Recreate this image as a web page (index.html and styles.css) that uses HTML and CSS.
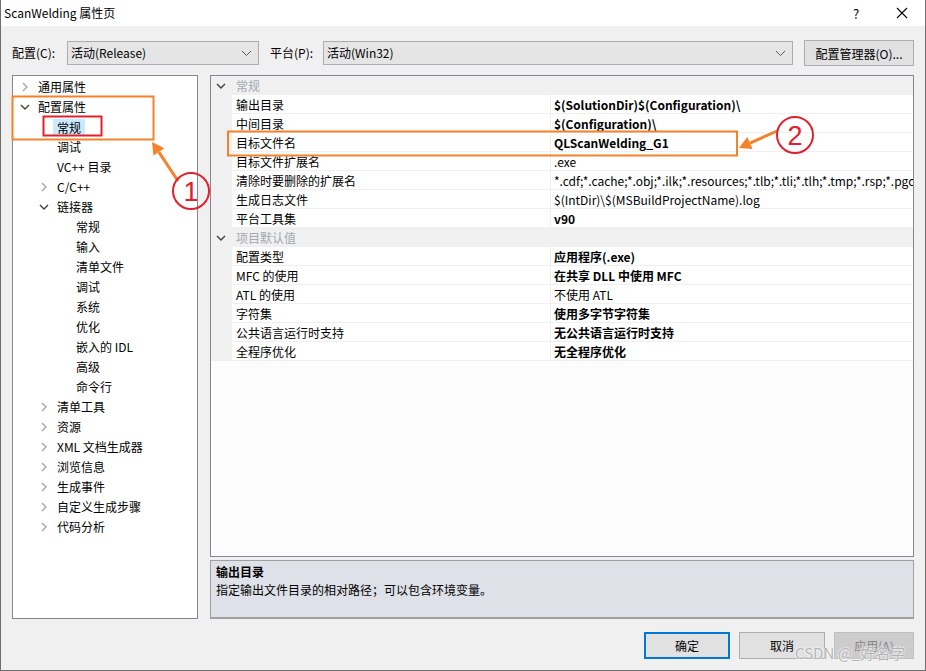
FILE: index.html
```html
<!DOCTYPE html>
<html lang="zh-CN">
<head>
    <meta charset="UTF-8">
    <title>ScanWelding 属性页</title>
    <link rel="stylesheet" href="styles.css">
</head>
<body>
<div class="screen">
    <div class="window">
        <div class="titlebar">
            <span class="title">ScanWelding 属性页</span>
            <span class="cap-btn">?</span>
            <span class="cap-btn">
                <svg width="12" height="12" viewBox="0 0 12 12"><path d="M1 1L11 11M11 1L1 11" stroke="#000" stroke-width="1.1"/></svg>
            </span>
        </div>

        <div class="body">
            <div class="config-row">
                <span class="field-label">配置(C):</span>
                <div class="combo combo-config">
                    <span>活动(Release)</span>
                    <svg width="11" height="7" viewBox="0 0 11 7"><path d="M1 1L5.5 5.5L10 1" fill="none" stroke="#555" stroke-width="1"/></svg>
                </div>
                <span class="field-label platform-label">平台(P):</span>
                <div class="combo combo-platform">
                    <span>活动(Win32)</span>
                    <svg width="11" height="7" viewBox="0 0 11 7"><path d="M1 1L5.5 5.5L10 1" fill="none" stroke="#555" stroke-width="1"/></svg>
                </div>
                <button class="btn btn-manager">配置管理器(O)...</button>
            </div>

            <div class="main">
                <ul class="tree">
                    <li class="node lvl0"><span class="twisty closed"></span>通用属性</li>
                    <li class="node lvl0"><span class="twisty open"></span>配置属性</li>
                    <li class="node lvl1"><span class="twisty"></span><span class="sel">常规</span></li>
                    <li class="node lvl1"><span class="twisty"></span>调试</li>
                    <li class="node lvl1"><span class="twisty"></span>VC++ 目录</li>
                    <li class="node lvl1"><span class="twisty closed"></span>C/C++</li>
                    <li class="node lvl1"><span class="twisty open"></span>链接器</li>
                    <li class="node lvl2"><span class="twisty"></span>常规</li>
                    <li class="node lvl2"><span class="twisty"></span>输入</li>
                    <li class="node lvl2"><span class="twisty"></span>清单文件</li>
                    <li class="node lvl2"><span class="twisty"></span>调试</li>
                    <li class="node lvl2"><span class="twisty"></span>系统</li>
                    <li class="node lvl2"><span class="twisty"></span>优化</li>
                    <li class="node lvl2"><span class="twisty"></span>嵌入的 IDL</li>
                    <li class="node lvl2"><span class="twisty"></span>高级</li>
                    <li class="node lvl2"><span class="twisty"></span>命令行</li>
                    <li class="node lvl1"><span class="twisty closed"></span>清单工具</li>
                    <li class="node lvl1"><span class="twisty closed"></span>资源</li>
                    <li class="node lvl1"><span class="twisty closed"></span>XML 文档生成器</li>
                    <li class="node lvl1"><span class="twisty closed"></span>浏览信息</li>
                    <li class="node lvl1"><span class="twisty closed"></span>生成事件</li>
                    <li class="node lvl1"><span class="twisty closed"></span>自定义生成步骤</li>
                    <li class="node lvl1"><span class="twisty closed"></span>代码分析</li>
                </ul>

                <div class="right">
                    <div class="grid">
                        <div class="prow cat"><span class="gutter"><span class="twisty open"></span></span><span class="cat-name">常规</span></div>
                        <div class="prow"><span class="gutter"></span><span class="name">输出目录</span><span class="val b">$(SolutionDir)$(Configuration)\</span></div>
                        <div class="prow"><span class="gutter"></span><span class="name">中间目录</span><span class="val b">$(Configuration)\</span></div>
                        <div class="prow"><span class="gutter"></span><span class="name">目标文件名</span><span class="val b">QLScanWelding_G1</span></div>
                        <div class="prow"><span class="gutter"></span><span class="name">目标文件扩展名</span><span class="val">.exe</span></div>
                        <div class="prow"><span class="gutter"></span><span class="name">清除时要删除的扩展名</span><span class="val">*.cdf;*.cache;*.obj;*.ilk;*.resources;*.tlb;*.tli;*.tlh;*.tmp;*.rsp;*.pgc;*.pgd;*.meta;$(TargetPath)</span></div>
                        <div class="prow"><span class="gutter"></span><span class="name">生成日志文件</span><span class="val">$(IntDir)\$(MSBuildProjectName).log</span></div>
                        <div class="prow"><span class="gutter"></span><span class="name">平台工具集</span><span class="val b">v90</span></div>
                        <div class="prow cat"><span class="gutter"><span class="twisty open"></span></span><span class="cat-name">项目默认值</span></div>
                        <div class="prow"><span class="gutter"></span><span class="name">配置类型</span><span class="val b">应用程序(.exe)</span></div>
                        <div class="prow"><span class="gutter"></span><span class="name">MFC 的使用</span><span class="val b">在共享 DLL 中使用 MFC</span></div>
                        <div class="prow"><span class="gutter"></span><span class="name">ATL 的使用</span><span class="val">不使用 ATL</span></div>
                        <div class="prow"><span class="gutter"></span><span class="name">字符集</span><span class="val b">使用多字节字符集</span></div>
                        <div class="prow"><span class="gutter"></span><span class="name">公共语言运行时支持</span><span class="val b">无公共语言运行时支持</span></div>
                        <div class="prow"><span class="gutter"></span><span class="name">全程序优化</span><span class="val b">无全程序优化</span></div>
                    </div>
                    <div class="desc">
                        <div class="desc-title">输出目录</div>
                        <div>指定输出文件目录的相对路径；可以包含环境变量。</div>
                    </div>
                </div>
            </div>

            <div class="buttons">
                <button class="btn btn-ok">确定</button>
                <button class="btn">取消</button>
                <button class="btn btn-off">应用(A)</button>
            </div>
        </div>
    </div>

    <!-- hand drawn marks on top of the screenshot -->
    <svg class="marks" width="926" height="671" viewBox="0 0 926 671">
        <g fill="none" stroke="#f5822a" stroke-width="2">
            <rect x="12.5" y="96.5" width="141" height="43"/>
            <rect x="228" y="131.5" width="509" height="24"/>
        </g>
        <rect x="43.5" y="116.5" width="58" height="19" fill="none" stroke="#e3202a" stroke-width="2"/>

        <line x1="178" y1="181" x2="158.8" y2="151.9" stroke="#f5822a" stroke-width="3"/>
        <path d="M152 142L164.3 148.3L153.4 155.6Z" fill="#f5822a"/>
        <line x1="777" y1="131" x2="750" y2="143.1" stroke="#f5822a" stroke-width="3"/>
        <path d="M739 148L747.3 137L752.6 149Z" fill="#f5822a"/>

        <g fill="none" stroke="#e3202a" stroke-width="2">
            <circle cx="191" cy="191" r="18"/>
            <circle cx="795" cy="135" r="18"/>
        </g>
        <g fill="#e3202a" font-family="Liberation Sans, sans-serif" font-size="27" text-anchor="middle">
            <text x="191" y="201">1</text>
            <text x="795" y="145">2</text>
        </g>
    </svg>
    <div class="watermark">CSDN @_好名字</div>
</div>
</body>
</html>
```

FILE: styles.css
```css
body {
    margin: 0;
    background: #ffffff;
    font-family: "Segoe UI", "Noto Sans CJK SC", sans-serif;
    font-size: 12px;
    color: #000;
}

.screen {
    position: relative;
    width: 926px;
    height: 671px;
}

.window {
    width: 926px;
    height: 671px;
    box-sizing: border-box;
    border: 1px solid #6f6f6f;
    border-top: none;
    background: #f0f0f0;
    display: flex;
    flex-direction: column;
    overflow: hidden;
}

.titlebar {
    height: 26px;
    flex-shrink: 0;
    background: #ffffff;
    display: flex;
    align-items: center;
    padding-left: 3px;
}

.title {
    flex: 1;
    line-height: 26px;
}

.cap-btn {
    width: 46px;
    height: 26px;
    display: flex;
    align-items: center;
    justify-content: center;
    font-size: 13px;
}

.body {
    flex: 1;
    padding: 15px 11px 0 11px;
}

/* top row */
.config-row {
    display: flex;
    align-items: center;
    height: 24px;
}

.field-label {
    width: 55px;
    line-height: 24px;
}

.platform-label {
    width: 53px;
    margin-left: 11px;
}

.combo {
    height: 24px;
    box-sizing: border-box;
    border: 1px solid #adadad;
    background: #e5e5e5;
    display: flex;
    align-items: center;
    justify-content: space-between;
    padding: 0 6px 0 3px;
    line-height: 22px;
}

.combo-config {
    width: 192px;
}

.combo-platform {
    flex: 1;
}

.btn {
    font-family: inherit;
    font-size: 12px;
    color: #000;
    background: #e1e1e1;
    border: 1px solid #adadad;
    padding: 0;
    height: 27px;
    width: 86px;
}

.btn-manager {
    width: 110px;
    height: 26px;
    margin-left: 11px;
}

.main {
    display: flex;
    gap: 12px;
    height: 544px;
    margin-top: 10px;
}

/* tree on the left */
.tree {
    width: 186px;
    box-sizing: border-box;
    border: 1px solid #828790;
    background: #ffffff;
    list-style: none;
    margin: 0;
    padding: 1px 0 0 0;
}

.node {
    height: 20px;
    display: flex;
    align-items: center;
    white-space: nowrap;
    line-height: 20px;
}

.lvl0 { padding-left: 3px; }
.lvl1 { padding-left: 22px; }
.lvl2 { padding-left: 41px; }

.twisty {
    width: 18px;
    height: 20px;
    margin-right: 4px;
    flex-shrink: 0;
    background-repeat: no-repeat;
    background-position: center;
}

.twisty.closed {
    background-image: url("data:image/svg+xml,%3Csvg xmlns='http://www.w3.org/2000/svg' width='6' height='10'%3E%3Cpath d='M1 1L5 5L1 9' fill='none' stroke='%23a6a6a6' stroke-width='1.4'/%3E%3C/svg%3E");
}

.twisty.open {
    background-image: url("data:image/svg+xml,%3Csvg xmlns='http://www.w3.org/2000/svg' width='10' height='6'%3E%3Cpath d='M1 1L5 5L9 1' fill='none' stroke='%23404040' stroke-width='1.4'/%3E%3C/svg%3E");
}

.sel {
    background: #cce8ff;
    padding: 0 4px;
    margin-left: -4px;
    line-height: 17px;
}

/* property grid */
.right {
    flex: 1;
    display: flex;
    flex-direction: column;
    gap: 3px;
}

.grid {
    height: 482px;
    box-sizing: border-box;
    border: 1px solid #828790;
    background: #fcfcfc;
    overflow: hidden;
}

.prow {
    display: grid;
    grid-template-columns: 21px 318px 1fr;
    height: 19px;
    line-height: 18px;
}

.prow .gutter {
    background: #f0f0f0;
    display: flex;
}

.prow .gutter .twisty {
    height: 19px;
    margin: 0;
    width: 20px;
}

.prow .name,
.prow .val {
    box-sizing: border-box;
    background: #ffffff;
    border-bottom: 1px solid #f0f0f0;
    padding-top: 1px;
    white-space: nowrap;
    overflow: hidden;
}

.prow .name {
    padding-left: 4px;
}

.prow .val {
    border-left: 1px solid #f0f0f0;
    padding-left: 3px;
}

.prow .b {
    font-weight: bold;
}

.prow.cat {
    background: #f0f0f0;
}

.cat-name {
    grid-column: 2 / 4;
    padding: 1px 0 0 4px;
    color: #a3a8b1;
}

.desc {
    height: 59px;
    box-sizing: border-box;
    border: 1px solid #a0a0a0;
    border-bottom-width: 2px;
    background: #dee1e8;
    padding: 2px 5px 0 5px;
    line-height: 18px;
}

.desc-title {
    font-weight: bold;
}

/* dialog buttons */
.buttons {
    display: flex;
    justify-content: flex-end;
    gap: 9px;
    margin-top: 13px;
}

.btn-ok {
    border: 2px solid #0078d7;
}

.btn-off {
    width: 80px;
    background: #cccccc;
    border-color: #bfbfbf;
    color: #838383;
}

.marks {
    position: absolute;
    top: 0;
    left: 0;
    pointer-events: none;
}

.watermark {
    position: absolute;
    left: 795px;
    top: 643px;
    font-size: 15px;
    line-height: 20px;
    color: #b4b4b4;
    text-shadow: 0 0 2px #fff, 0 0 2px #fff;
    white-space: nowrap;
}
```
